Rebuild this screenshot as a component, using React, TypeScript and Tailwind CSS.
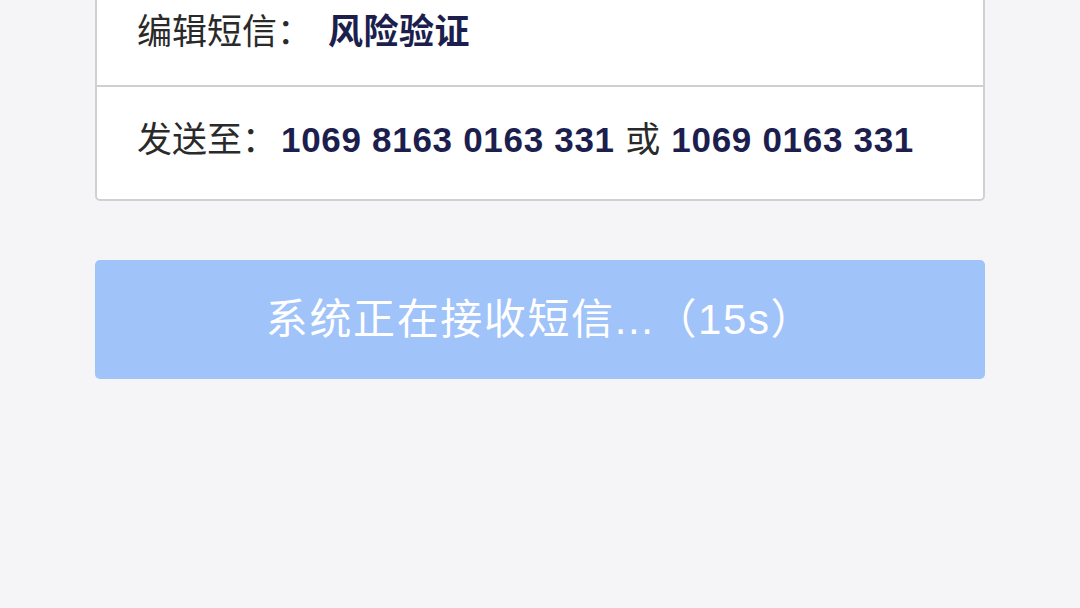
export default function App() {
  const font = { fontFamily: '"Liberation Sans", "Noto Sans CJK SC", sans-serif' }
  return (
    <div className="w-[1080px] h-[608px] overflow-hidden bg-[#f5f4f7]" style={font}>
      <div className="mx-[95px] -mt-[28px]">
        {/* Info card */}
        <div className="bg-white border-2 border-[#d0d0d3] rounded-b-[5px]">
          <div className="h-[113px] flex items-center pt-[6px] pl-[40px] border-b-2 border-[#d0d0d3]">
            <span className="text-[35px] text-[#2a2a2a]">编辑短信：</span>
            <span className="ml-[16px] text-[35px] font-bold text-[#1c1f4e] tracking-[0.5px]">风险验证</span>
          </div>
          <div className="h-[112px] flex items-center pb-[6px] pl-[40px]">
            <span className="text-[35px] text-[#2a2a2a]">发送至：</span>
            <span className="ml-[4px] text-[35px] font-bold text-[#1c1f4e] tracking-[0.7px]">
              1069 8163 0163 331 <span className="font-normal text-[#2a2a2a]">或</span> 1069 0163 331
            </span>
          </div>
        </div>

        {/* Status button */}
        <div className="mt-[59px] h-[119px] rounded-[5px] bg-[#a0c3fa] flex items-center justify-center">
          <span className="text-[42px] text-white tracking-[1.6px]">系统正在接收短信...（15s）</span>
        </div>
      </div>
    </div>
  )
}
